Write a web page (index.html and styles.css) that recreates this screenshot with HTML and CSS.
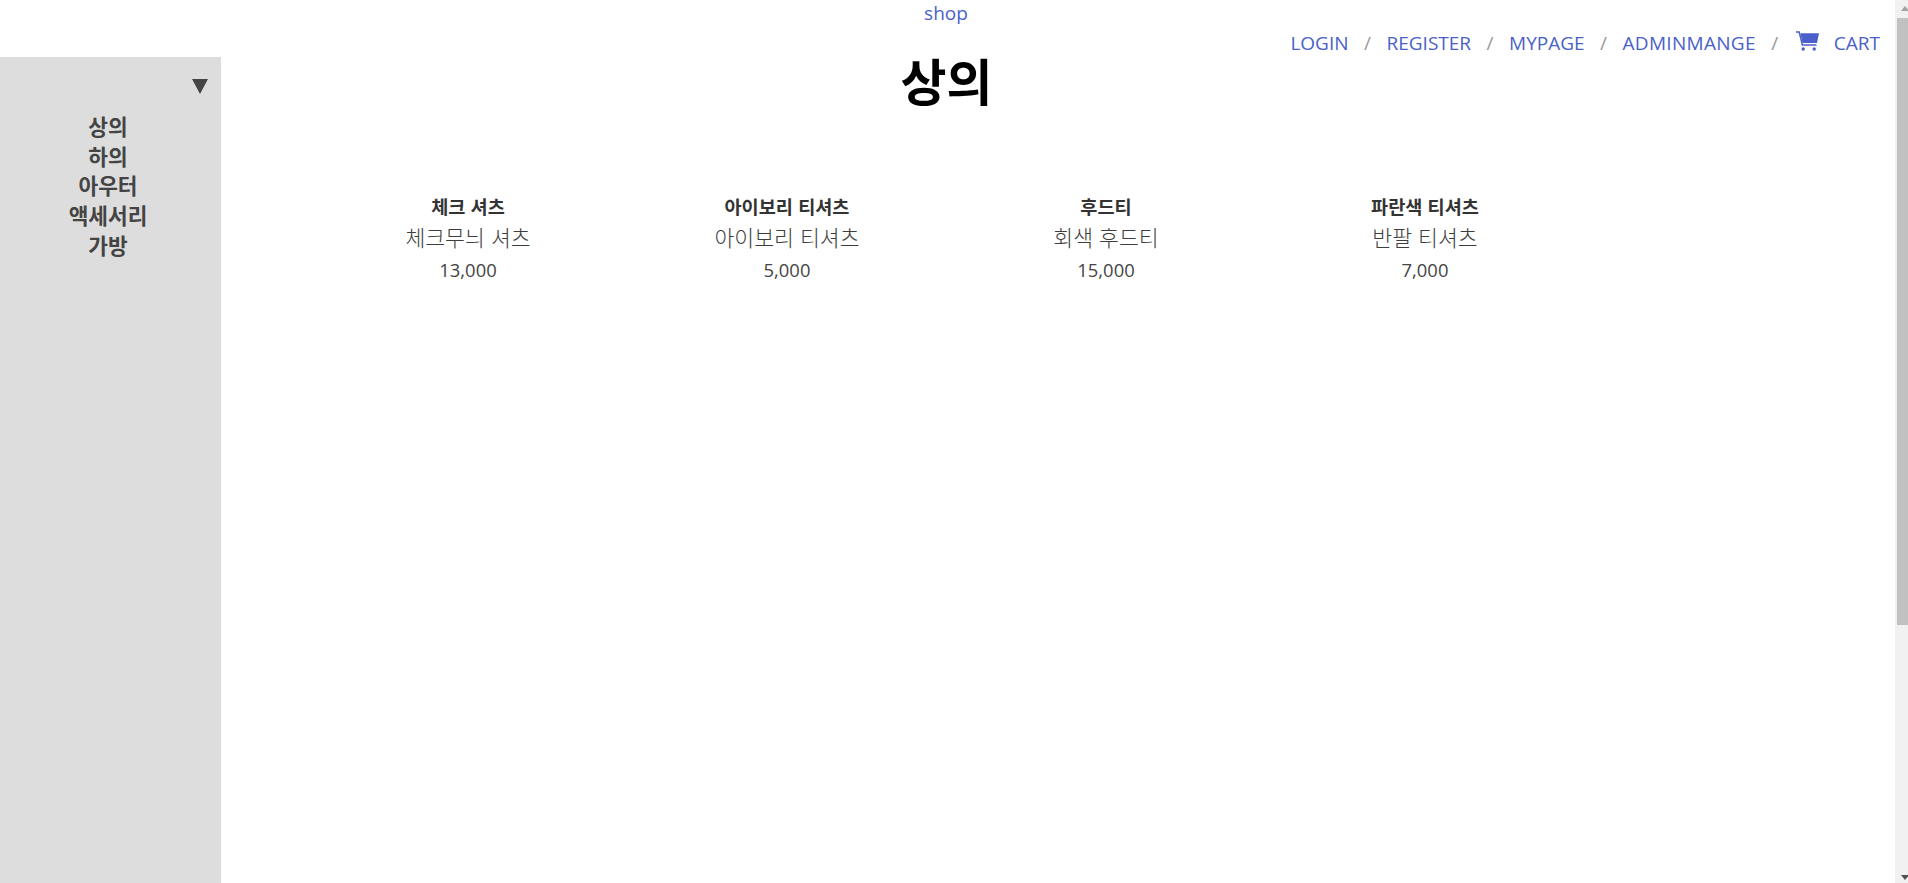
FILE: index.html
```html
<!DOCTYPE html>
<html lang="ko">
<head>
<meta charset="utf-8">
<title>shop</title>
<link rel="stylesheet" href="styles.css">
</head>
<body>
<div class="page">
  <header class="header">
    <a class="brand" href="#">shop</a>
    <nav class="topnav">
      <a href="#">LOGIN</a><span class="sep">/</span>
      <a href="#">REGISTER</a><span class="sep">/</span>
      <a href="#">MYPAGE</a><span class="sep">/</span>
      <a class="wide" href="#">ADMINMANGE</a><span class="sep">/</span>
      <a class="cart" href="#">
        <svg class="cart-icon" viewBox="0 0 23 20" aria-hidden="true">
          <path class="cart-frame" d="M0 1H3.2L6.4 14H20.5"/>
          <path d="M4.4 2.2H23L21 12H6.6z"/>
          <circle cx="7.2" cy="18" r="1.7"/>
          <circle cx="18.2" cy="18" r="1.7"/>
        </svg>
        <span>CART</span>
      </a>
    </nav>
  </header>
  <div class="body-row">
    <aside class="sidebar">
      <div class="toggle"><svg class="toggle-icon" viewBox="0 0 16 15" aria-hidden="true"><path d="M0 0h16L8 15z"/></svg></div>
      <ul class="menu">
        <li>상의</li>
        <li>하의</li>
        <li>아우터</li>
        <li>액세서리</li>
        <li>가방</li>
      </ul>
    </aside>
    <main class="main">
      <h1 class="title">상의</h1>
      <section class="products">
        <article class="product"><strong>체크 셔츠</strong><span class="desc">체크무늬 셔츠</span><span class="price">13,000</span></article>
        <article class="product"><strong>아이보리 티셔츠</strong><span class="desc">아이보리 티셔츠</span><span class="price">5,000</span></article>
        <article class="product"><strong>후드티</strong><span class="desc">회색 후드티</span><span class="price">15,000</span></article>
        <article class="product"><strong>파란색 티셔츠</strong><span class="desc">반팔 티셔츠</span><span class="price">7,000</span></article>
      </section>
    </main>
  </div>
</div>
<div class="scrollbar" aria-hidden="true">
  <div class="arrow arrow-up"></div>
  <div class="thumb"></div>
  <div class="arrow arrow-down"></div>
</div>
</body>
</html>
```
FILE: styles.css
```css
* { box-sizing: border-box; }
html, body { margin: 0; height: 883px; overflow: hidden; }
body {
  display: flex;
  background: #fff;
  color: #333;
  font-family: "Open Sans", "Noto Sans CJK KR", sans-serif;
}
a { color: #4a5fc9; text-decoration: none; }
.page { flex: 1; display: flex; flex-direction: column; min-width: 0; }
.header { height: 57px; display: flex; flex-direction: column; }
.brand { align-self: center; font-size: 19px; line-height: 26px; margin-left: -3px; }
.topnav {
  display: flex;
  align-items: center;
  justify-content: flex-end;
  padding: 4px 15px 0 0;
  font-size: 19px;
  line-height: 26px;
}
.sep { color: #999; margin: 0 15.5px; }
.wide { letter-spacing: 0.3px; }
.cart { display: flex; align-items: center; gap: 15px; margin-left: 2px; }
.cart-icon { width: 23px; height: 20px; fill: #4a5fc9; margin-top: -4px; }
.cart-frame { fill: none; stroke: #4a5fc9; stroke-width: 1.5; }
.body-row { flex: 1; display: flex; min-height: 0; }
.sidebar { width: 221px; background: #ddd; }
.toggle { display: flex; justify-content: flex-end; padding: 22px 13px 0 0; height: 54px; }
.toggle-icon { width: 16px; height: 15px; fill: #444; }
.menu {
  list-style: none;
  margin: 0;
  padding: 0 5px 0 0;
  text-align: center;
  font: 700 21.4px/29.7px "Noto Sans CJK KR", sans-serif;
  color: #444;
}
.main { flex: 1; padding: 0 310.5px 0 87.5px; }
.title {
  margin: 0;
  text-align: center;
  color: #000;
  font: 700 50px/44px "Noto Sans CJK KR", sans-serif;
}
.products { display: grid; grid-template-columns: repeat(4, 319px); margin-top: 90px; }
.product { display: flex; flex-direction: column; align-items: center; }
.product strong { font: 700 18.6px/30px "Noto Sans CJK KR", sans-serif; color: #333; }
.desc { font: 300 21.6px/31px "Noto Sans CJK KR", sans-serif; color: #3d3d3d; }
.price { font-size: 18.4px; line-height: 35px; color: #444; }
.scrollbar {
  width: 13px;
  background: #f1f1f1;
  display: flex;
  flex-direction: column;
  align-items: flex-end;
}
.arrow { width: 11px; height: 18px; flex: none; position: relative; }
.arrow::after {
  content: "";
  position: absolute;
  left: 4px;
  border-left: 4px solid transparent;
  border-right: 4px solid transparent;
}
.arrow-up::after { top: 6px; border-bottom: 5px solid #a3a3a3; }
.arrow-down { margin-top: auto; }
.arrow-down::after { bottom: 3px; border-top: 5px solid #505050; }
.thumb { width: 11px; height: 607px; background: #c1c1c1; }
```
